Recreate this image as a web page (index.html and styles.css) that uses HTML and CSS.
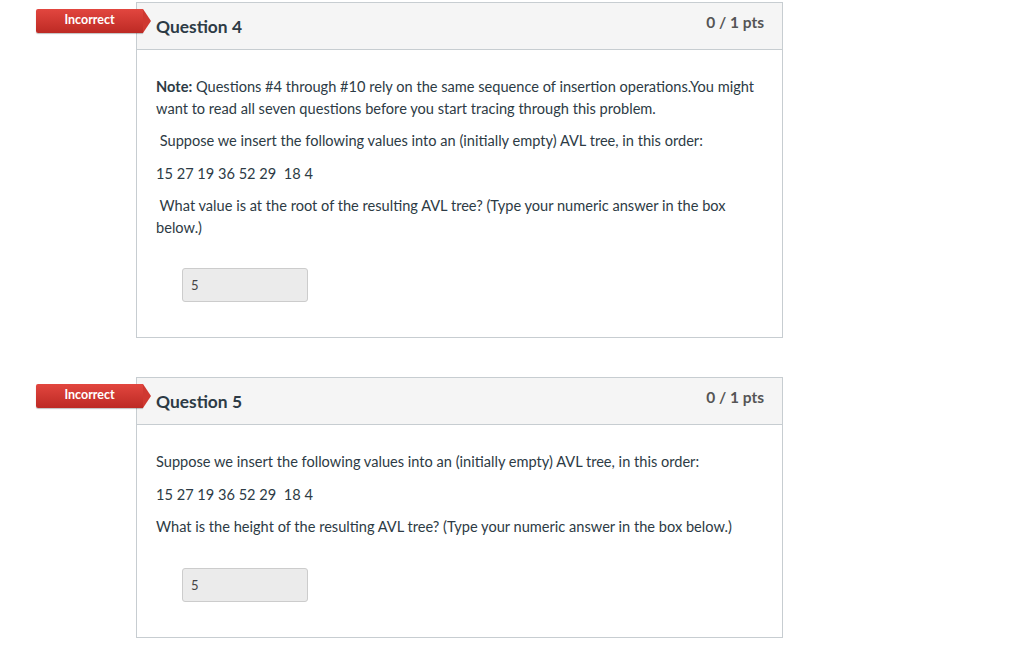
FILE: index.html
```html
<!DOCTYPE html>
<html lang="en">
<head>
  <meta charset="UTF-8" />
  <title>Quiz Results</title>
  <link rel="stylesheet" href="styles.css">
</head>
<body>
  <div class="quiz">
    <div class="question">
      <span class="badge">Incorrect</span>
      <div class="header">
        <span class="title">Question 4</span>
        <span class="points">0 / 1 pts</span>
      </div>
      <div class="text">
        <p><strong>Note:</strong> Questions #4 through #10 rely on the same sequence of insertion operations.You might want to read all seven questions before you start tracing through this problem.</p>
        <p>&nbsp;Suppose we insert the following values into an (initially empty) AVL tree, in this order:</p>
        <p>15 27 19 36 52 29 &nbsp;18 4</p>
        <p>&nbsp;What value is at the root of the resulting AVL tree? (Type your numeric answer in the box below.)</p>
        <div class="answer">5</div>
      </div>
    </div>

    <div class="question">
      <span class="badge">Incorrect</span>
      <div class="header">
        <span class="title">Question 5</span>
        <span class="points">0 / 1 pts</span>
      </div>
      <div class="text">
        <p>Suppose we insert the following values into an (initially empty) AVL tree, in this order:</p>
        <p>15 27 19 36 52 29 &nbsp;18 4</p>
        <p>What is the height of the resulting AVL tree? (Type your numeric answer in the box below.)</p>
        <div class="answer">5</div>
      </div>
    </div>
  </div>
</body>
</html>
```

FILE: styles.css
```css
body {
  margin: 0;
  background: #fff;
  font-family: Lato, 'Open Sans', sans-serif;
  color: #2d3b45;
}

.quiz {
  padding: 2px 0 0 136px;
  width: 647px;
  display: flex;
  flex-direction: column;
  gap: 39px;
}

.question {
  position: relative;
  border: 1px solid #c7cdd1;
}

.header {
  display: flex;
  justify-content: space-between;
  height: 46px;
  padding: 0 18px 0 19px;
  background: #f5f5f5;
  border-bottom: 1px solid #c7cdd1;
}

.title {
  font-size: 17.4px;
  font-weight: bold;
  line-height: 47px;
}

.points {
  font-size: 15.5px;
  font-weight: bold;
  color: #555;
  line-height: 38px;
}

.text {
  padding: 26px 19px 35px 19px;
  font-size: 14.6px;
  line-height: 21.5px;
}

.text p {
  margin: 0 0 11px 0;
}

.answer {
  margin: 30px 0 0 26px;
  width: 116px;
  height: 32px;
  padding-left: 8px;
  line-height: 32px;
  font-size: 13px;
  color: #444;
  background: #ebebeb;
  border: 1px solid #ccc;
  border-radius: 3px;
}

.badge {
  position: absolute;
  top: 6px;
  left: -101px;
  width: 107px;
  height: 24px;
  line-height: 22px;
  text-align: center;
  font-size: 12.5px;
  font-weight: bold;
  color: #fff;
  background: linear-gradient(#e2463f, #bd2a24);
  border-radius: 2px 0 0 2px;
  box-shadow: 0 1px 1px rgba(0,0,0,0.25);
}

.badge::after {
  content: '';
  position: absolute;
  right: -8px;
  top: 0;
  border-top: 12px solid transparent;
  border-bottom: 12px solid transparent;
  border-left: 8px solid #cf3831;
}
```
